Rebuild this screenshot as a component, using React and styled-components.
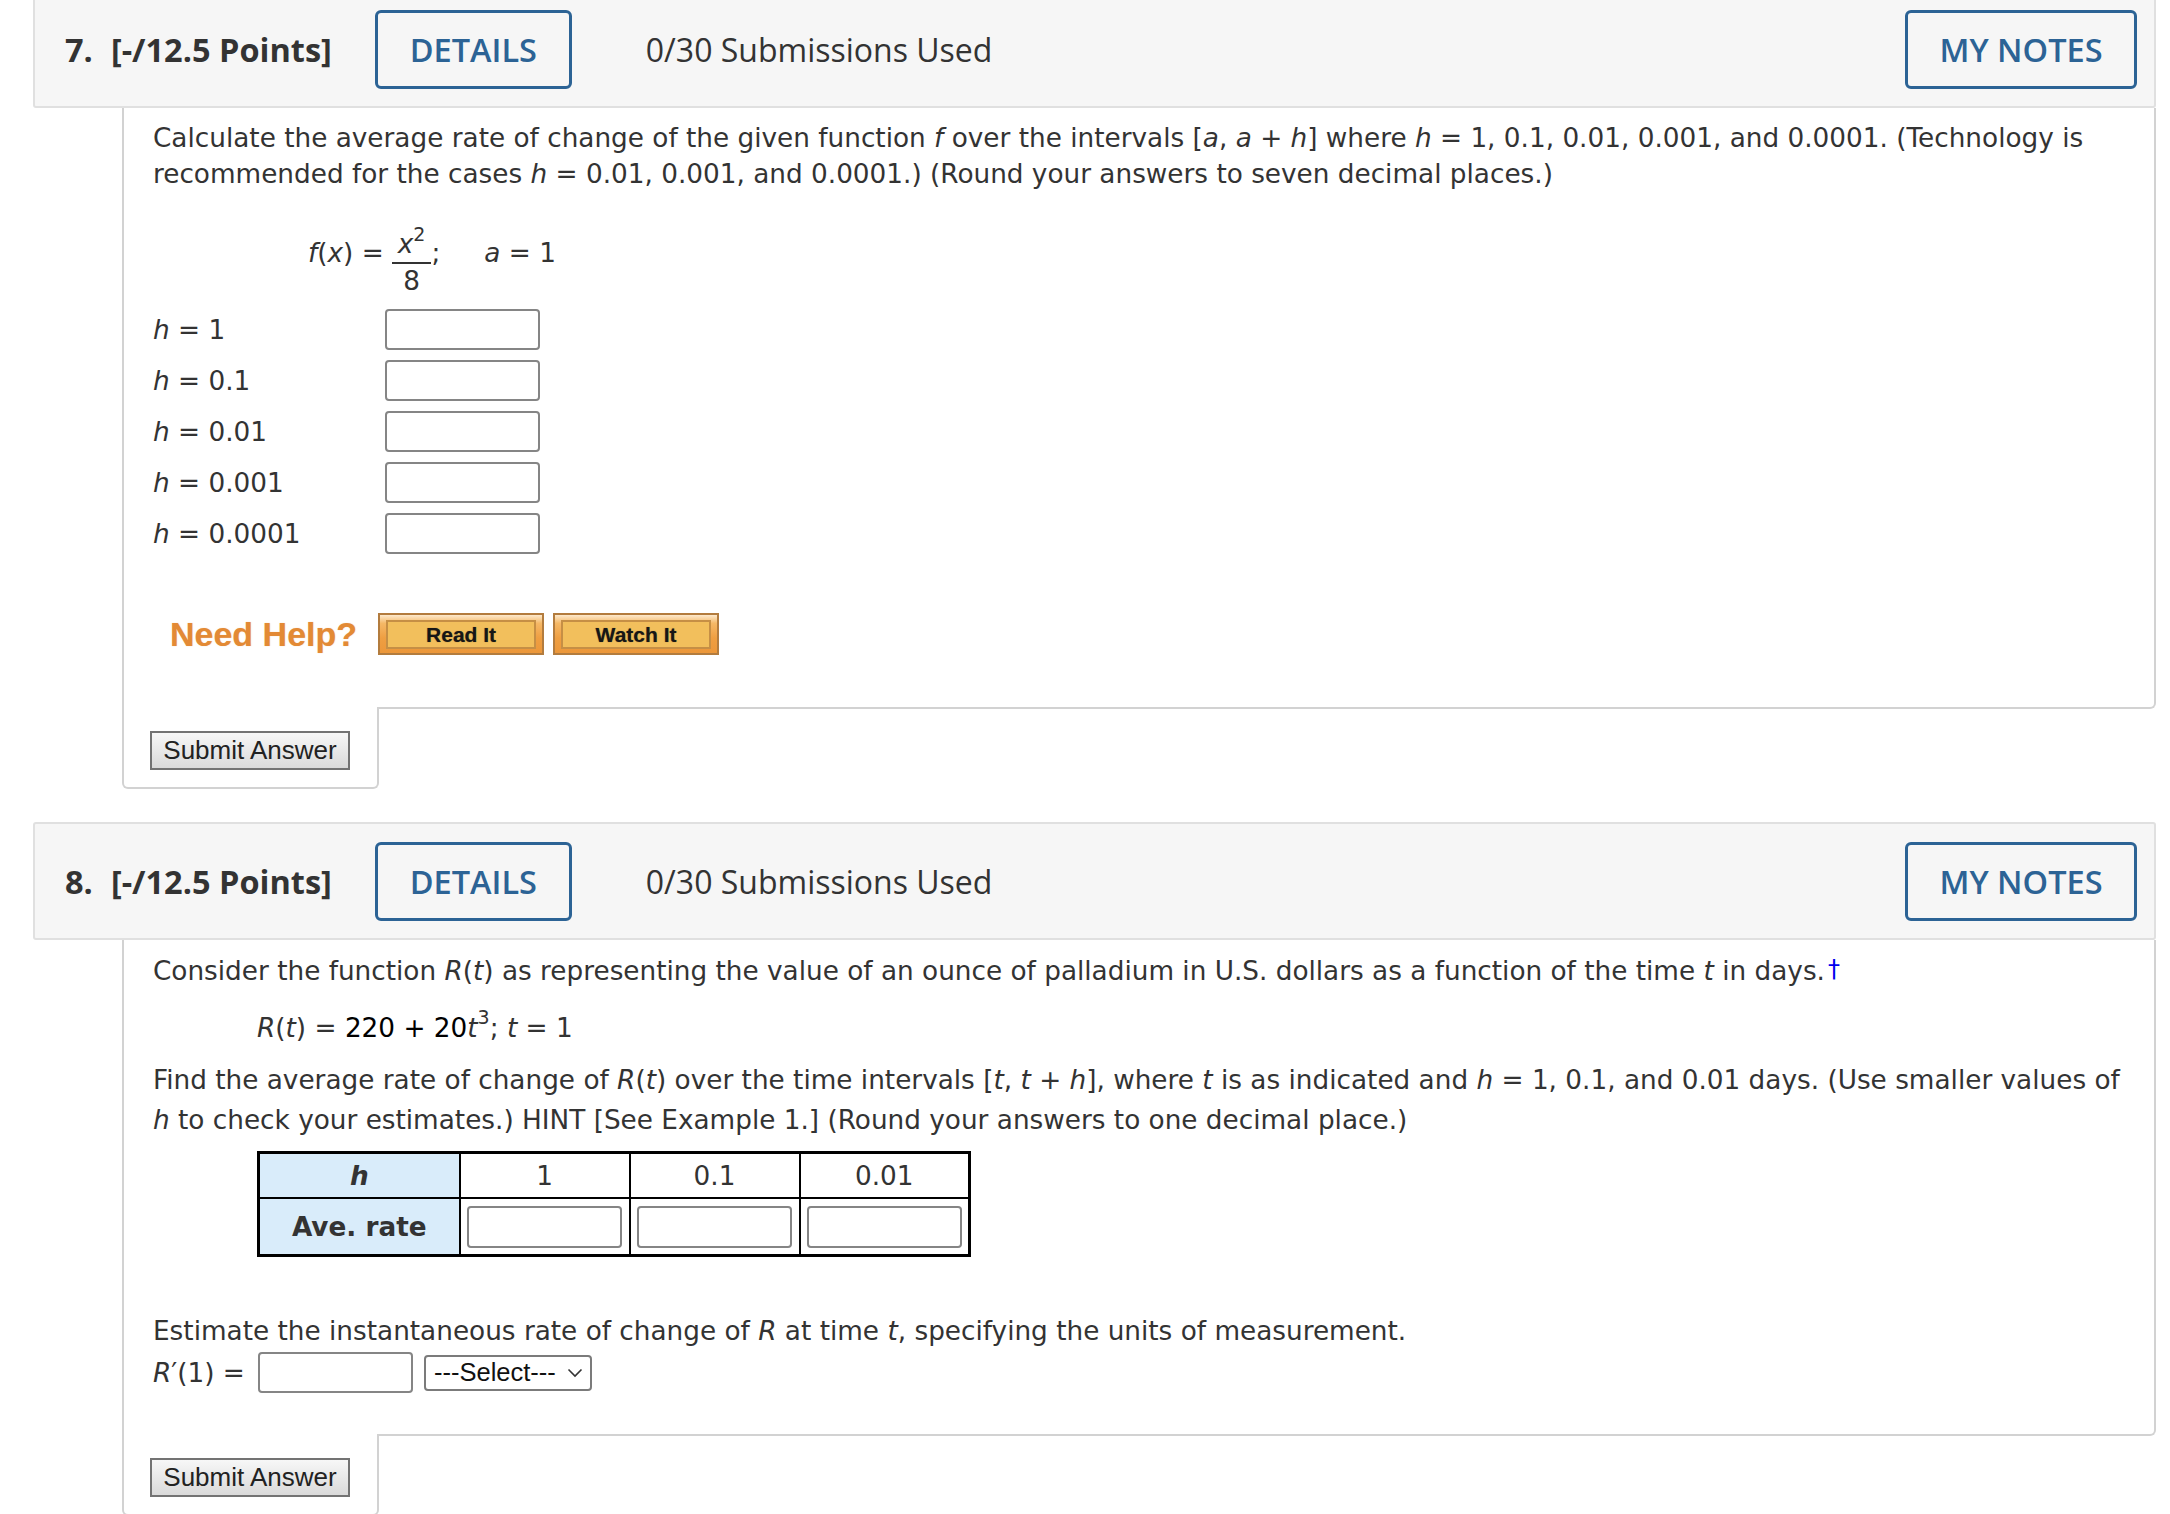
import React from "react";
import styled, { createGlobalStyle } from "styled-components";

const GlobalStyle = createGlobalStyle`
  html, body {
    margin: 0;
    padding: 0;
    background: #ffffff;
  }
  body {
    font-family: "DejaVu Sans", Verdana, sans-serif;
    color: #333333;
  }
`;

/* ---------- page frame ---------- */

const Page = styled.main`
  padding: 0 14px 0 33px;
  margin-top: -10px;
`;

const Question = styled.section`
  & + & {
    margin-top: 33px;
  }
`;

/* ---------- question header bar ---------- */

const Header = styled.header`
  display: flex;
  align-items: center;
  box-sizing: border-box;
  height: 118px;
  padding: 0 17px 0 30px;
  background: #f6f6f6;
  border: 2px solid #e0e0e0;
  border-radius: 3px;
  font-family: "Open Sans", "Liberation Sans", sans-serif;
  font-size: 32px;
  color: #333333;
`;

const Points = styled.h2`
  margin: 0;
  font-size: 32.5px;
  font-weight: 700;
  white-space: nowrap;
`;

const QNum = styled.span`
  margin-right: 18px;
`;

const OutlineButton = styled.button`
  box-sizing: border-box;
  width: ${(p) => p.$w}px;
  height: 79px;
  margin-left: ${(p) => (p.$auto ? "auto" : `${p.$gap}px`)};
  padding: 0;
  border: 3px solid #2c6395;
  border-radius: 6px;
  background: transparent;
  color: #2c6395;
  font-family: "Open Sans", "Liberation Sans", sans-serif;
  font-size: 32.5px;
  font-weight: 600;
  cursor: pointer;
`;

const Usage = styled.span`
  margin-left: 74px;
  font-weight: 400;
  white-space: nowrap;
`;

/* ---------- question body ---------- */

const Body = styled.div`
  margin-left: 89px;
  padding: ${(p) => p.$top}px 12px ${(p) => p.$bottom}px 29px;
  border: 2px solid #d2d2d2;
  border-top: none;
  border-radius: 0 0 6px 0;
  font-size: 26.3px;
`;

const Para = styled.p`
  margin: ${(p) => p.$mt || 0}px 0 0 ${(p) => p.$indent || 0}px;
  line-height: ${(p) => p.$lh || 36}px;
  white-space: nowrap;
`;

const Var = styled.i`
  font-style: italic;
`;

const Dark = styled.span`
  color: #000000;
`;

const Sup = styled.sup`
  font-size: 19px;
  line-height: 0;
  vertical-align: ${(p) => p.$raise || 13}px;
`;

const Dagger = styled.sup`
  color: #0000ee;
  font-size: 24px;
  line-height: 0;
  vertical-align: 3px;
  margin-left: 3px;
`;

const FormulaLine = styled.div`
  margin-top: 39px;
  padding-left: 155px;
  line-height: 26px;
  white-space: nowrap;
`;

const Frac = styled.span`
  display: inline-flex;
  flex-direction: column;
  align-items: center;
  vertical-align: 9px;
  margin-left: 8px;
`;

const Numer = styled.span`
  padding: 0 6px 5px;
  border-bottom: 2px solid #333333;
`;

const Denom = styled.span`
  padding-top: 4px;
`;

const Gap = styled.span`
  display: inline-block;
  width: ${(p) => p.$w}px;
`;

/* ---------- answer inputs ---------- */

const AnswerList = styled.div`
  margin-top: ${(p) => (p.$mt === undefined ? 15 : p.$mt)}px;
  display: flex;
  flex-direction: column;
  gap: 10px;
`;

const AnswerRow = styled.div`
  display: flex;
  align-items: center;
  height: 41px;
`;

const RowLabel = styled.span`
  width: ${(p) => p.$w || 232}px;
  line-height: 26px;
  white-space: nowrap;
`;

const TextBox = styled.input`
  box-sizing: border-box;
  width: 155px;
  height: ${(p) => p.$h || 41}px;
  padding: 0 6px;
  border: 2px solid #858585;
  border-radius: 4px;
  background: #ffffff;
  font-family: "DejaVu Sans", Verdana, sans-serif;
  font-size: 22px;
  outline: none;
`;

/* ---------- help buttons ---------- */

const HelpRow = styled.div`
  display: flex;
  align-items: center;
  margin-top: 59px;
  padding-left: 17px;
`;

const HelpLabel = styled.span`
  margin-right: 21px;
  font-family: "Liberation Sans", Arial, sans-serif;
  font-size: 34px;
  font-weight: 700;
  color: #e38a35;
  text-shadow: 0 0 1px rgba(227, 138, 53, 0.5);
`;

const HelpButton = styled.button`
  box-sizing: border-box;
  width: ${(p) => p.$w}px;
  height: 42px;
  margin-right: 9px;
  padding: 5px 6px 4px;
  border: 2px solid #b37c3e;
  background: linear-gradient(
    to bottom,
    #fde9cc 0%,
    #f5b866 22%,
    #ef9f42 60%,
    #ec973a 100%
  );
  cursor: pointer;
`;

const HelpFace = styled.span`
  display: block;
  height: 100%;
  box-sizing: border-box;
  border: 2px solid #c68f45;
  background: #f2bf5c;
  font-family: "Liberation Sans", Arial, sans-serif;
  font-size: 21px;
  font-weight: 700;
  line-height: 25px;
  color: #161616;
  text-shadow: 0 0 1px rgba(0, 0, 0, 0.45);
`;

/* ---------- submit strip ---------- */

const SubmitBox = styled.div`
  box-sizing: border-box;
  width: 257px;
  margin: -2px 0 0 89px;
  padding: 24px 0 17px 26px;
  border: 2px solid #d2d2d2;
  border-top: none;
  border-radius: 0 0 6px 6px;
  background: #ffffff;
`;

const SubmitButton = styled.button`
  box-sizing: border-box;
  width: 200px;
  height: 39px;
  padding: 0;
  border: 2px solid #737373;
  border-radius: 0;
  background: linear-gradient(to bottom, #f7f7f7, #dadada);
  font-family: "Liberation Sans", Arial, sans-serif;
  font-size: 26px;
  color: #222222;
  cursor: pointer;
`;

/* ---------- rate table ---------- */

const RateTable = styled.table`
  margin: 11px 0 0 104px;
  width: 714px;
  table-layout: fixed;
  border-collapse: collapse;
  border: 3px solid #000000;
`;

const Cell = styled.td`
  height: ${(p) => p.$h}px;
  padding: 0;
  border: 2px solid #000000;
  text-align: center;
  vertical-align: middle;
  background: ${(p) => (p.$head ? "#d9ecfa" : "#ffffff")};
  font-weight: ${(p) => (p.$head ? 700 : 400)};
  line-height: 26px;
`;

/* ---------- units select ---------- */

const SelectBox = styled.div`
  display: inline-flex;
  align-items: center;
  justify-content: space-between;
  box-sizing: border-box;
  width: 168px;
  height: 36px;
  margin-left: 11px;
  padding: 0 7px 0 8px;
  border: 2px solid #7b7b7b;
  border-radius: 4px;
  background: #ffffff;
  font-family: "Liberation Sans", Arial, sans-serif;
  font-size: 25.5px;
  color: #111111;
`;

const Chevron = () => (
  <svg width="16" height="10" viewBox="0 0 16 10" aria-hidden="true">
    <path d="M1.5 1.5 L8 8 L14.5 1.5" fill="none" stroke="#333" strokeWidth="1.6" />
  </svg>
);

function QuestionHeader({ num }) {
  return (
    <Header>
      <Points>
        <QNum>{num}.</QNum>[-/12.5 Points]
      </Points>
      <OutlineButton $w={197} $gap={43}>DETAILS</OutlineButton>
      <Usage>0/30 Submissions Used</Usage>
      <OutlineButton $w={232} $auto>MY NOTES</OutlineButton>
    </Header>
  );
}

const hValues = ["1", "0.1", "0.01", "0.001", "0.0001"];

export default function App() {
  return (
    <>
      <GlobalStyle />
      <Page>
        <Question>
          <QuestionHeader num={7} />
          <Body $top={12} $bottom={52}>
            <Para>
              Calculate the average rate of change of the given function <Var>f</Var> over the
              intervals [<Var>a</Var>, <Var>a</Var> + <Var>h</Var>] where <Var>h</Var> = 1, 0.1,
              0.01, 0.001, and 0.0001. (Technology is
              <br />
              recommended for the cases <Var>h</Var> = 0.01, 0.001, and 0.0001.) (Round your
              answers to seven decimal places.)
            </Para>
            <FormulaLine>
              <Var>f</Var>(<Var>x</Var>) =
              <Frac>
                <Numer>
                  <Var>x</Var>
                  <Sup $raise={12}>2</Sup>
                </Numer>
                <Denom>8</Denom>
              </Frac>
              ;<Gap $w={44} />
              <Var>a</Var> = 1
            </FormulaLine>
            <AnswerList>
              {hValues.map((v) => (
                <AnswerRow key={v}>
                  <RowLabel>
                    <Var>h</Var> = {v}
                  </RowLabel>
                  <TextBox type="text" />
                </AnswerRow>
              ))}
            </AnswerList>
            <HelpRow>
              <HelpLabel>Need Help?</HelpLabel>
              <HelpButton $w={166}>
                <HelpFace>Read It</HelpFace>
              </HelpButton>
              <HelpButton $w={166}>
                <HelpFace>Watch It</HelpFace>
              </HelpButton>
            </HelpRow>
          </Body>
          <SubmitBox>
            <SubmitButton>Submit Answer</SubmitButton>
          </SubmitBox>
        </Question>

        <Question>
          <QuestionHeader num={8} />
          <Body $top={13} $bottom={41}>
            <Para>
              Consider the function <Var>R</Var>(<Var>t</Var>) as representing the value of an
              ounce of palladium in U.S. dollars as a function of the time <Var>t</Var> in days.
              <Dagger>†</Dagger>
            </Para>
            <Para $mt={21} $indent={104}>
              <Var>R</Var>(<Var>t</Var>) = <Dark>220 + 20</Dark>
              <Var>t</Var>
              <Sup>3</Sup>; <Var>t</Var> = 1
            </Para>
            <Para $mt={14} $lh={40}>
              Find the average rate of change of <Var>R</Var>(<Var>t</Var>) over the time
              intervals [<Var>t</Var>, <Var>t</Var> + <Var>h</Var>], where <Var>t</Var> is as
              indicated and <Var>h</Var> = 1, 0.1, and 0.01 days. (Use smaller values of
              <br />
              <Var>h</Var> to check your estimates.) HINT [See Example 1.] (Round your answers to
              one decimal place.)
            </Para>
            <RateTable>
              <colgroup>
                <col style={{ width: 201 }} />
                <col />
                <col />
                <col />
              </colgroup>
              <tbody>
                <tr>
                  <Cell $head $h={43}>
                    <Var>h</Var>
                  </Cell>
                  <Cell $h={43}>1</Cell>
                  <Cell $h={43}>0.1</Cell>
                  <Cell $h={43}>0.01</Cell>
                </tr>
                <tr>
                  <Cell $head $h={55}>
                    Ave. rate
                  </Cell>
                  {[0, 1, 2].map((i) => (
                    <Cell key={i} $h={55}>
                      <TextBox type="text" $h={42} />
                    </Cell>
                  ))}
                </tr>
              </tbody>
            </RateTable>
            <Para $mt={56}>
              Estimate the instantaneous rate of change of <Var>R</Var> at time <Var>t</Var>,
              specifying the units of measurement.
            </Para>
            <AnswerList $mt={3}>
              <AnswerRow>
                <RowLabel $w={105}>
                  <Var>R</Var>′(1) =
                </RowLabel>
                <TextBox type="text" />
                <SelectBox>
                  ---Select---
                  <Chevron />
                </SelectBox>
              </AnswerRow>
            </AnswerList>
          </Body>
          <SubmitBox>
            <SubmitButton>Submit Answer</SubmitButton>
          </SubmitBox>
        </Question>
      </Page>
    </>
  );
}
